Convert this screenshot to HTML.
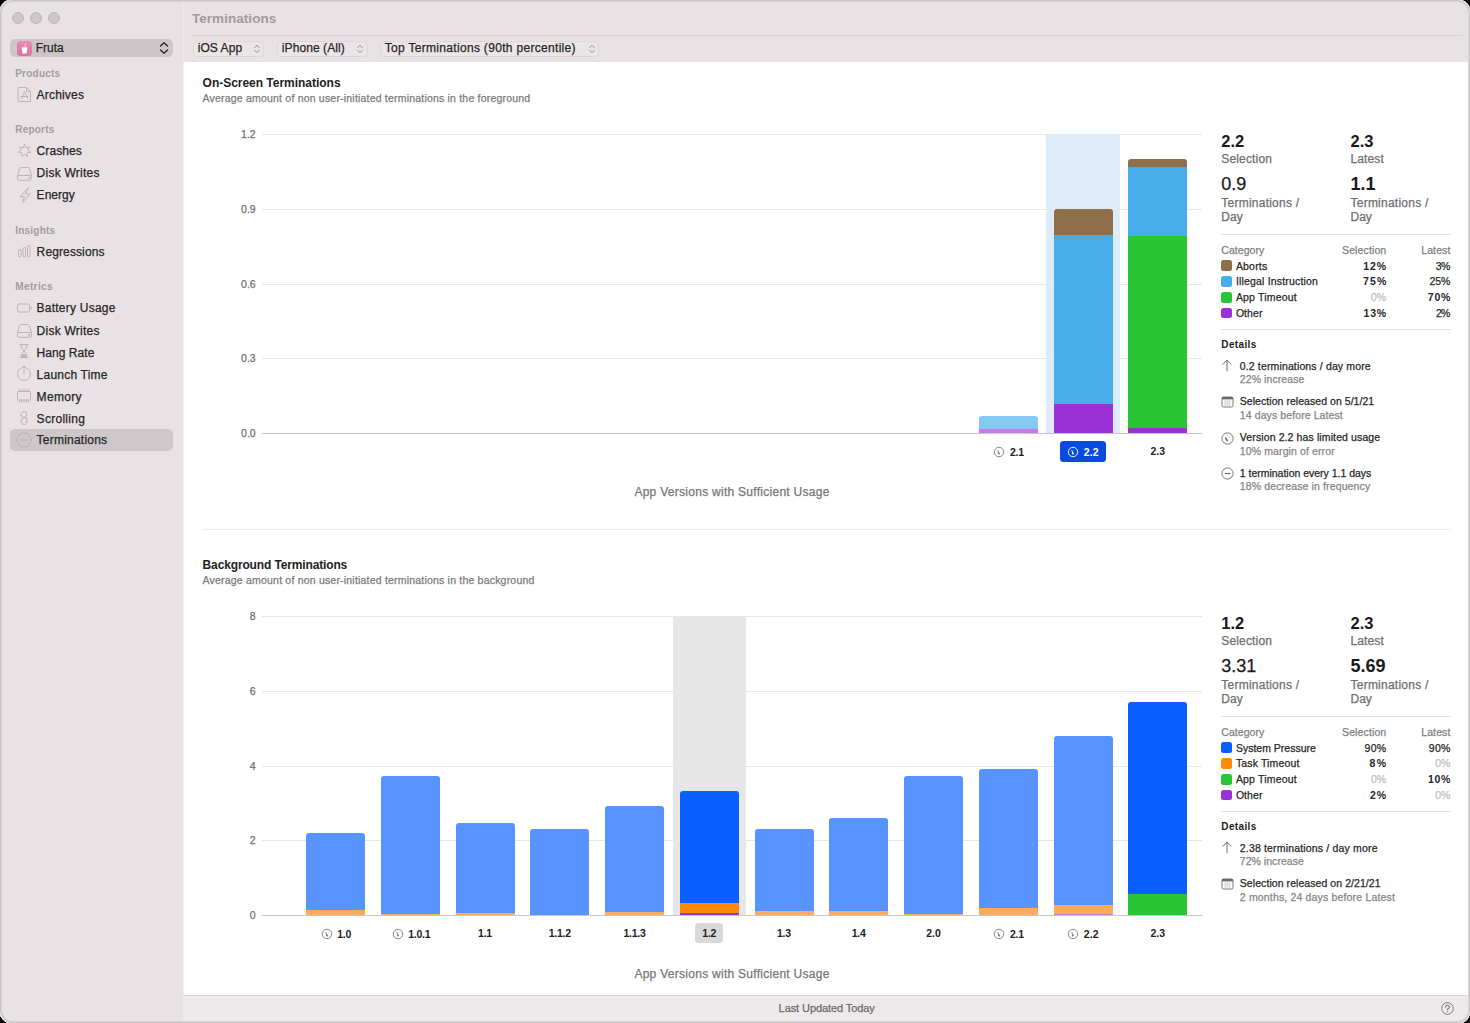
<!DOCTYPE html>
<html><head><meta charset="utf-8"><title>Terminations</title>
<style>
html,body{margin:0;padding:0;background:#000;width:1470px;height:1023px;overflow:hidden}
#win{position:absolute;left:-1px;top:-1px;width:1472px;height:1025px;border-radius:14px;overflow:hidden;background:#E8E2E4}
#inner{position:absolute;left:1px;top:1px;width:1470px;height:1023px}
#frame{position:absolute;left:0;top:0;width:1472px;height:1025px;border-radius:14px;box-shadow:inset 0 0 0 1px #EFECED, inset 0 0 0 2px #CBC7C9, inset 0 0 0 3px #D8D4D6;pointer-events:none}
.t{position:absolute;white-space:nowrap;font-family:"Liberation Sans",sans-serif}
.r{position:absolute}
</style></head><body>
<div id="win"><div id="inner">
<div class="r" style="left:184px;top:62px;width:1284px;height:933px;background:#FFFFFF;"></div>
<div class="r" style="left:184px;top:995px;width:1284px;height:1px;background:#D9D4D6;"></div>
<div class="r" style="left:184px;top:996px;width:1284px;height:27px;background:#EEE9EB;"></div>
<div class="r" style="left:183px;top:0px;width:1px;height:62px;background:#EDE8EA;"></div>
<div class="r" style="left:183px;top:62px;width:1px;height:933px;background:#F3EFF0;"></div>
<div class="r" style="left:183px;top:996px;width:1px;height:27px;background:#EDE8EA;"></div>
<div class="r" style="left:11.75px;top:11.75px;width:10.5px;height:10.5px;border-radius:50%;background:#CCC7C9;border:0.75px solid #BDB8BA"></div>
<div class="r" style="left:29.75px;top:11.75px;width:10.5px;height:10.5px;border-radius:50%;background:#CCC7C9;border:0.75px solid #BDB8BA"></div>
<div class="r" style="left:47.75px;top:11.75px;width:10.5px;height:10.5px;border-radius:50%;background:#CCC7C9;border:0.75px solid #BDB8BA"></div>
<div class="r" style="left:10px;top:39px;width:163px;height:18px;background:#CCC6C8;border-radius:5px;"></div>
<div class="r" style="left:17px;top:41px;width:14.5px;height:14.5px;border-radius:3.5px;background:linear-gradient(#E98CB3,#DF6E9C)"></div>
<svg class="r" style="left:17px;top:41px" width="15" height="15" viewBox="0 0 15 15"><path d="M4.6 6.2 L10.4 6.2 L9.6 12.6 L5.4 12.6 Z" fill="#fff"/><path d="M7.8 6.2 L8.6 2.2" stroke="#fff" stroke-width="0.8" opacity="0.8"/></svg>
<div class="t" style="left:35.70px;top:41.74px;font-size:12px;line-height:12px;font-weight:normal;color:#262626;letter-spacing:-0.013px;-webkit-text-stroke:0.25px currentColor;">Fruta</div>
<svg class="r" style="left:158px;top:41px" width="12" height="14" viewBox="0 0 12 14"><path d="M2.5 5 L6 1.8 L9.5 5" fill="none" stroke="#2E2E2E" stroke-width="1.5" stroke-linecap="round" stroke-linejoin="round"/><path d="M2.5 9 L6 12.2 L9.5 9" fill="none" stroke="#2E2E2E" stroke-width="1.5" stroke-linecap="round" stroke-linejoin="round"/></svg>
<div class="t" style="left:15.20px;top:68.53px;font-size:10px;line-height:10px;font-weight:bold;color:#A19C9E;letter-spacing:0.236px;">Products</div>
<div class="t" style="left:15.20px;top:124.94px;font-size:10px;line-height:10px;font-weight:bold;color:#A19C9E;letter-spacing:0.233px;">Reports</div>
<div class="t" style="left:15.20px;top:225.63px;font-size:10px;line-height:10px;font-weight:bold;color:#A19C9E;letter-spacing:0.236px;">Insights</div>
<div class="t" style="left:15.20px;top:282.24px;font-size:10px;line-height:10px;font-weight:bold;color:#A19C9E;letter-spacing:0.400px;">Metrics</div>
<div class="r" style="left:10px;top:429px;width:163px;height:22px;background:#CDC7C9;border-radius:5px;"></div>
<div class="t" style="left:36.60px;top:88.54px;font-size:12px;line-height:12px;font-weight:normal;color:#262626;letter-spacing:0.186px;-webkit-text-stroke:0.25px currentColor;">Archives</div>
<div class="t" style="left:36.60px;top:145.14px;font-size:12px;line-height:12px;font-weight:normal;color:#262626;letter-spacing:0.067px;-webkit-text-stroke:0.25px currentColor;">Crashes</div>
<div class="t" style="left:36.60px;top:167.24px;font-size:12px;line-height:12px;font-weight:normal;color:#262626;letter-spacing:0.235px;-webkit-text-stroke:0.25px currentColor;">Disk Writes</div>
<div class="t" style="left:36.60px;top:189.44px;font-size:12px;line-height:12px;font-weight:normal;color:#262626;letter-spacing:0.040px;-webkit-text-stroke:0.25px currentColor;">Energy</div>
<div class="t" style="left:36.60px;top:245.74px;font-size:12px;line-height:12px;font-weight:normal;color:#262626;letter-spacing:0.120px;-webkit-text-stroke:0.25px currentColor;">Regressions</div>
<div class="t" style="left:36.60px;top:302.14px;font-size:12px;line-height:12px;font-weight:normal;color:#262626;letter-spacing:0.229px;-webkit-text-stroke:0.25px currentColor;">Battery Usage</div>
<div class="t" style="left:36.60px;top:324.54px;font-size:12px;line-height:12px;font-weight:normal;color:#262626;letter-spacing:0.235px;-webkit-text-stroke:0.25px currentColor;">Disk Writes</div>
<div class="t" style="left:36.60px;top:346.64px;font-size:12px;line-height:12px;font-weight:normal;color:#262626;letter-spacing:0.044px;-webkit-text-stroke:0.25px currentColor;">Hang Rate</div>
<div class="t" style="left:36.60px;top:368.54px;font-size:12px;line-height:12px;font-weight:normal;color:#262626;letter-spacing:0.220px;-webkit-text-stroke:0.25px currentColor;">Launch Time</div>
<div class="t" style="left:36.60px;top:390.64px;font-size:12px;line-height:12px;font-weight:normal;color:#262626;letter-spacing:0.330px;-webkit-text-stroke:0.25px currentColor;">Memory</div>
<div class="t" style="left:36.60px;top:412.94px;font-size:12px;line-height:12px;font-weight:normal;color:#262626;letter-spacing:0.287px;-webkit-text-stroke:0.25px currentColor;">Scrolling</div>
<div class="t" style="left:36.60px;top:434.24px;font-size:12px;line-height:12px;font-weight:normal;color:#262626;letter-spacing:0.223px;-webkit-text-stroke:0.25px currentColor;">Terminations</div>
<svg class="r" style="left:14px;top:86px" width="20" height="18" viewBox="0 0 20 18" fill="none" stroke="#B5B0B2" stroke-width="0.9" stroke-linecap="round" stroke-linejoin="round"><path d="M4.5 1.5 H12.5 L16.5 5.5 V15.5 H4.5 Z"/><path d="M12.5 1.5 V5.5 H16.5"/><path d="M7.5 12.5 L10.5 5.5 L13.5 12.5 M6.8 10.5 H14.2"/></svg>
<svg class="r" style="left:14px;top:141px" width="20" height="18" viewBox="0 0 20 18" fill="none" stroke="#B5B0B2" stroke-width="0.9" stroke-linecap="round" stroke-linejoin="round"><polygon points="10.50,3.50 11.98,6.74 15.43,5.87 13.81,9.04 16.64,11.20 13.16,11.92 13.23,15.48 10.50,13.20 7.77,15.48 7.84,11.92 4.36,11.20 7.19,9.04 5.57,5.87 9.02,6.74"/></svg>
<svg class="r" style="left:14px;top:165px" width="20" height="18" viewBox="0 0 20 18" fill="none" stroke="#B5B0B2" stroke-width="0.9" stroke-linecap="round" stroke-linejoin="round"><path d="M3.5 11 L5.6 3.6 Q6 2.5 7.2 2.5 H13.8 Q15 2.5 15.4 3.6 L17.5 11"/><rect x="3.2" y="10.5" width="14.3" height="4.8" rx="2"/><circle cx="15" cy="13" r="0.5" fill="#B5B0B2"/></svg>
<svg class="r" style="left:14px;top:186px" width="20" height="18" viewBox="0 0 20 18" fill="none" stroke="#B5B0B2" stroke-width="0.9" stroke-linecap="round" stroke-linejoin="round"><path d="M14.2 2 L6 10.8 H10.5 L8.5 16.5 L16 8 H11.8 Z"/></svg>
<svg class="r" style="left:14px;top:242px" width="20" height="18" viewBox="0 0 20 18" fill="none" stroke="#B5B0B2" stroke-width="0.9" stroke-linecap="round" stroke-linejoin="round"><rect x="4.5" y="7.5" width="2.6" height="7.5" rx="1.3"/><rect x="9" y="5.5" width="2.6" height="9.5" rx="1.3"/><rect x="13.5" y="3.5" width="2.6" height="11.5" rx="1.3"/></svg>
<svg class="r" style="left:14px;top:300px" width="20" height="18" viewBox="0 0 20 18" fill="none" stroke="#B5B0B2" stroke-width="0.9" stroke-linecap="round" stroke-linejoin="round"><rect x="3.5" y="4" width="12" height="8" rx="1.5"/><path d="M17.2 6.8 V9.2"/></svg>
<svg class="r" style="left:14px;top:322px" width="20" height="18" viewBox="0 0 20 18" fill="none" stroke="#B5B0B2" stroke-width="0.9" stroke-linecap="round" stroke-linejoin="round"><path d="M3.5 11 L5.6 3.6 Q6 2.5 7.2 2.5 H13.8 Q15 2.5 15.4 3.6 L17.5 11"/><rect x="3.2" y="10.5" width="14.3" height="4.8" rx="2"/><circle cx="15" cy="13" r="0.5" fill="#B5B0B2"/></svg>
<svg class="r" style="left:14px;top:342px" width="20" height="18" viewBox="0 0 20 18" fill="none" stroke="#B5B0B2" stroke-width="0.9" stroke-linecap="round" stroke-linejoin="round"><path d="M6 2.5 H14 M6 15.5 H14 M7 2.5 Q7 7 10 9 Q13 7 13 2.5 M7 15.5 Q7 11 10 9 Q13 11 13 15.5"/><path d="M8 14.5 L10 12 L12 14.5 Z" fill="#B5B0B2"/></svg>
<svg class="r" style="left:14px;top:364px" width="20" height="18" viewBox="0 0 20 18" fill="none" stroke="#B5B0B2" stroke-width="0.9" stroke-linecap="round" stroke-linejoin="round"><circle cx="10" cy="10" r="6.5"/><path d="M10 10 V5.5 M9 2.2 H11"/></svg>
<svg class="r" style="left:14px;top:387px" width="20" height="18" viewBox="0 0 20 18" fill="none" stroke="#B5B0B2" stroke-width="0.9" stroke-linecap="round" stroke-linejoin="round"><rect x="3.5" y="4.5" width="13" height="8.5" rx="1"/><path d="M5.5 2.5 V4 M7.8 2.5 V4 M10 2.5 V4 M12.2 2.5 V4 M14.5 2.5 V4 M5.5 13.5 V15 M7.8 13.5 V15 M10 13.5 V15 M12.2 13.5 V15 M14.5 13.5 V15"/></svg>
<svg class="r" style="left:14px;top:409px" width="20" height="18" viewBox="0 0 20 18" fill="none" stroke="#B5B0B2" stroke-width="0.9" stroke-linecap="round" stroke-linejoin="round"><path d="M7 7 Q7 2.5 10 2.5 Q13 2.5 13 6 L10 9 L7 6.5 M7 11 Q7 15.5 10 15.5 Q13 15.5 13 11 Q13 8 10 8.5 L7 11"/></svg>
<svg class="r" style="left:14px;top:431px" width="20" height="18" viewBox="0 0 20 18" fill="none" stroke="#B5B0B2" stroke-width="0.9" stroke-linecap="round" stroke-linejoin="round"><circle cx="10" cy="9" r="7"/><path d="M6.5 9 H13.5"/></svg>
<div class="t" style="left:191.90px;top:11.87px;font-size:13.5px;line-height:13.5px;font-weight:bold;color:#A09B9D;letter-spacing:0.059px;">Terminations</div>
<div class="r" style="left:191px;top:35px;width:1272px;height:1px;background:#D8D3D5;"></div>
<div class="r" style="left:192.5px;top:41px;width:71.80000000000001px;height:15.5px;border-radius:4px;background:#EAE5E7;border:0.5px solid #DDD8DA;box-sizing:border-box"></div>
<div class="t" style="left:197.70px;top:42.14px;font-size:12px;line-height:12px;font-weight:normal;color:#262626;letter-spacing:0.058px;-webkit-text-stroke:0.25px currentColor;">iOS App</div>
<svg class="r" style="left:253.0px;top:43.5px" width="8" height="10" viewBox="0 0 8 10"><path d="M1.8 3.6 L4 1.4 L6.2 3.6 M1.8 6.4 L4 8.6 L6.2 6.4" fill="none" stroke="#8F8A8C" stroke-width="1" stroke-linecap="round" stroke-linejoin="round"/></svg>
<div class="r" style="left:276.6px;top:41px;width:91.0px;height:15.5px;border-radius:4px;background:#EAE5E7;border:0.5px solid #DDD8DA;box-sizing:border-box"></div>
<div class="t" style="left:281.80px;top:42.14px;font-size:12px;line-height:12px;font-weight:normal;color:#262626;letter-spacing:0.086px;-webkit-text-stroke:0.25px currentColor;">iPhone (All)</div>
<svg class="r" style="left:356.3px;top:43.5px" width="8" height="10" viewBox="0 0 8 10"><path d="M1.8 3.6 L4 1.4 L6.2 3.6 M1.8 6.4 L4 8.6 L6.2 6.4" fill="none" stroke="#8F8A8C" stroke-width="1" stroke-linecap="round" stroke-linejoin="round"/></svg>
<div class="r" style="left:379.5px;top:41px;width:219.70000000000005px;height:15.5px;border-radius:4px;background:#EAE5E7;border:0.5px solid #DDD8DA;box-sizing:border-box"></div>
<div class="t" style="left:384.70px;top:42.14px;font-size:12px;line-height:12px;font-weight:normal;color:#262626;letter-spacing:0.314px;-webkit-text-stroke:0.25px currentColor;">Top Terminations (90th percentile)</div>
<svg class="r" style="left:587.9px;top:43.5px" width="8" height="10" viewBox="0 0 8 10"><path d="M1.8 3.6 L4 1.4 L6.2 3.6 M1.8 6.4 L4 8.6 L6.2 6.4" fill="none" stroke="#8F8A8C" stroke-width="1" stroke-linecap="round" stroke-linejoin="round"/></svg>
<div class="t" style="left:778.60px;top:1003.29px;font-size:11px;line-height:11px;font-weight:normal;color:#6B6B6B;letter-spacing:-0.085px;-webkit-text-stroke:0.25px currentColor;">Last Updated Today</div>
<svg class="r" style="left:1440px;top:1001px" width="15" height="15" viewBox="0 0 15 15"><circle cx="7.5" cy="7.5" r="5.8" fill="none" stroke="#7A7A7A" stroke-width="1"/><path d="M5.6 6.1 Q5.6 4.2 7.5 4.2 Q9.4 4.2 9.4 5.9 Q9.4 7 8.2 7.5 Q7.5 7.8 7.5 8.8" fill="none" stroke="#7A7A7A" stroke-width="1.1" stroke-linecap="round"/><circle cx="7.5" cy="10.6" r="0.7" fill="#7A7A7A"/></svg>
<div class="t" style="left:202.60px;top:76.94px;font-size:12px;line-height:12px;font-weight:bold;color:#222222;letter-spacing:-0.024px;">On-Screen Terminations</div>
<div class="t" style="left:202.60px;top:92.71px;font-size:10.5px;line-height:10.5px;font-weight:normal;color:#7A7A7A;letter-spacing:0.199px;-webkit-text-stroke:0.25px currentColor;">Average amount of non user-initiated terminations in the foreground</div>
<div class="r" style="left:1046.4px;top:134px;width:73.3px;height:299px;background:#DEEBFB;"></div>
<div class="r" style="left:262px;top:134px;width:940px;height:1px;background:#E8E8E8;"></div>
<div class="t" style="left:241.10px;top:129.21px;font-size:10.5px;line-height:10.5px;font-weight:normal;color:#6E6E6E;letter-spacing:0.000px;-webkit-text-stroke:0.25px currentColor;">1.2</div>
<div class="r" style="left:262px;top:209px;width:940px;height:1px;background:#E8E8E8;"></div>
<div class="t" style="left:241.10px;top:204.21px;font-size:10.5px;line-height:10.5px;font-weight:normal;color:#6E6E6E;letter-spacing:0.000px;-webkit-text-stroke:0.25px currentColor;">0.9</div>
<div class="r" style="left:262px;top:284px;width:940px;height:1px;background:#E8E8E8;"></div>
<div class="t" style="left:241.10px;top:279.21px;font-size:10.5px;line-height:10.5px;font-weight:normal;color:#6E6E6E;letter-spacing:0.000px;-webkit-text-stroke:0.25px currentColor;">0.6</div>
<div class="r" style="left:262px;top:358px;width:940px;height:1px;background:#E8E8E8;"></div>
<div class="t" style="left:241.10px;top:353.21px;font-size:10.5px;line-height:10.5px;font-weight:normal;color:#6E6E6E;letter-spacing:0.000px;-webkit-text-stroke:0.25px currentColor;">0.3</div>
<div class="t" style="left:241.10px;top:428.21px;font-size:10.5px;line-height:10.5px;font-weight:normal;color:#6E6E6E;letter-spacing:0.000px;-webkit-text-stroke:0.25px currentColor;">0.0</div>
<div class="r" style="left:978.77px;top:416.1px;width:59px;height:16.9px;background:linear-gradient(to bottom,#85C8F2 0.00px, #85C8F2 13.00px,#C27DE6 13.00px, #C27DE6 16.90px);border-radius:3px 3px 0 0;"></div>
<div class="r" style="left:1053.5px;top:209px;width:59px;height:224px;background:linear-gradient(to bottom,#8F6F4A 0.00px, #8F6F4A 26.30px,#48AEEA 26.30px, #48AEEA 195.20px,#9B30D5 195.20px, #9B30D5 224.00px);border-radius:3px 3px 0 0;"></div>
<div class="r" style="left:1128.23px;top:159px;width:59px;height:274px;background:linear-gradient(to bottom,#8F6F4A 0.00px, #8F6F4A 8.20px,#48AEEA 8.20px, #48AEEA 77.20px,#2AC534 77.20px, #2AC534 269.10px,#9B30D5 269.10px, #9B30D5 274.00px);border-radius:3px 3px 0 0;"></div>
<div class="r" style="left:262px;top:433px;width:940px;height:1px;background:#C7C7C7;"></div>
<svg class="r" style="left:993.37px;top:445.90px" width="12" height="12" viewBox="0 0 12 12"><circle cx="6" cy="6" r="4.7" fill="none" stroke="#7A7A7A" stroke-width="0.9"/><path d="M4.9 4.6 L5.9 7.4" stroke="#7A7A7A" stroke-width="1.0" stroke-linecap="round"/><circle cx="6" cy="7.5" r="0.9" fill="#7A7A7A"/><circle cx="4" cy="4.2" r="0.3" fill="#7A7A7A" opacity="0.6"/><circle cx="6" cy="3" r="0.3" fill="#7A7A7A" opacity="0.6"/><circle cx="8" cy="4.2" r="0.3" fill="#7A7A7A" opacity="0.6"/></svg>
<div class="t" style="left:1009.97px;top:447.01px;font-size:10.5px;line-height:10.5px;font-weight:bold;color:#222222;letter-spacing:-0.250px;">2.1</div>
<div class="r" style="left:1059.8px;top:441.2px;width:46.4px;height:20.6px;background:#0B4ADB;border-radius:3.5px;"></div>
<svg class="r" style="left:1067.10px;top:445.90px" width="12" height="12" viewBox="0 0 12 12"><circle cx="6" cy="6" r="4.7" fill="none" stroke="#FFFFFF" stroke-width="0.9"/><path d="M4.9 4.6 L5.9 7.4" stroke="#FFFFFF" stroke-width="1.0" stroke-linecap="round"/><circle cx="6" cy="7.5" r="0.9" fill="#FFFFFF"/><circle cx="4" cy="4.2" r="0.3" fill="#FFFFFF" opacity="0.6"/><circle cx="6" cy="3" r="0.3" fill="#FFFFFF" opacity="0.6"/><circle cx="8" cy="4.2" r="0.3" fill="#FFFFFF" opacity="0.6"/></svg>
<div class="t" style="left:1083.70px;top:447.01px;font-size:10.5px;line-height:10.5px;font-weight:bold;color:#FFFFFF;letter-spacing:0.100px;">2.2</div>
<div class="t" style="left:1150.38px;top:446.21px;font-size:10.5px;line-height:10.5px;font-weight:bold;color:#222222;letter-spacing:0.050px;">2.3</div>

<div class="t" style="left:634.40px;top:485.94px;font-size:12px;line-height:12px;font-weight:normal;color:#767676;letter-spacing:0.276px;-webkit-text-stroke:0.25px currentColor;">App Versions with Sufficient Usage</div>
<div class="r" style="left:202px;top:529px;width:1249px;height:1px;background:#EBEBEB;"></div>
<div class="t" style="left:202.60px;top:558.94px;font-size:12px;line-height:12px;font-weight:bold;color:#222222;letter-spacing:-0.141px;">Background Terminations</div>
<div class="t" style="left:202.60px;top:574.71px;font-size:10.5px;line-height:10.5px;font-weight:normal;color:#7A7A7A;letter-spacing:0.200px;-webkit-text-stroke:0.25px currentColor;">Average amount of non user-initiated terminations in the background</div>
<div class="r" style="left:672.8px;top:616px;width:73.3px;height:299px;background:#E6E6E6;"></div>
<div class="r" style="left:262px;top:616px;width:940px;height:1px;background:#E8E8E8;"></div>
<div class="t" style="left:249.85px;top:611.21px;font-size:10.5px;line-height:10.5px;font-weight:normal;color:#6E6E6E;letter-spacing:0.000px;-webkit-text-stroke:0.25px currentColor;">8</div>
<div class="r" style="left:262px;top:691px;width:940px;height:1px;background:#E8E8E8;"></div>
<div class="t" style="left:249.85px;top:686.21px;font-size:10.5px;line-height:10.5px;font-weight:normal;color:#6E6E6E;letter-spacing:0.000px;-webkit-text-stroke:0.25px currentColor;">6</div>
<div class="r" style="left:262px;top:766px;width:940px;height:1px;background:#E8E8E8;"></div>
<div class="t" style="left:249.85px;top:761.21px;font-size:10.5px;line-height:10.5px;font-weight:normal;color:#6E6E6E;letter-spacing:0.000px;-webkit-text-stroke:0.25px currentColor;">4</div>
<div class="r" style="left:262px;top:840px;width:940px;height:1px;background:#E8E8E8;"></div>
<div class="t" style="left:249.85px;top:835.21px;font-size:10.5px;line-height:10.5px;font-weight:normal;color:#6E6E6E;letter-spacing:0.000px;-webkit-text-stroke:0.25px currentColor;">2</div>
<div class="t" style="left:249.85px;top:910.21px;font-size:10.5px;line-height:10.5px;font-weight:normal;color:#6E6E6E;letter-spacing:0.000px;-webkit-text-stroke:0.25px currentColor;">0</div>
<div class="r" style="left:306.2px;top:832.9px;width:59px;height:82.1px;background:linear-gradient(to bottom,#5894FF 0.00px, #5894FF 77.10px,#FFA95C 77.10px, #FFA95C 82.10px);border-radius:3px 3px 0 0;"></div>
<div class="r" style="left:380.93px;top:776px;width:59px;height:139px;background:linear-gradient(to bottom,#5894FF 0.00px, #5894FF 137.90px,#FFA95C 137.90px, #FFA95C 139.00px);border-radius:3px 3px 0 0;"></div>
<div class="r" style="left:455.66px;top:823.2px;width:59px;height:91.8px;background:linear-gradient(to bottom,#5894FF 0.00px, #5894FF 89.70px,#FFA95C 89.70px, #FFA95C 91.80px);border-radius:3px 3px 0 0;"></div>
<div class="r" style="left:530.39px;top:828.6px;width:59px;height:86.4px;background:linear-gradient(to bottom,#5894FF 0.00px, #5894FF 85.60px,#FFA95C 85.60px, #FFA95C 86.40px);border-radius:3px 3px 0 0;"></div>
<div class="r" style="left:605.12px;top:805.7px;width:59px;height:109.3px;background:linear-gradient(to bottom,#5894FF 0.00px, #5894FF 106.10px,#FFA95C 106.10px, #FFA95C 109.30px);border-radius:3px 3px 0 0;"></div>
<div class="r" style="left:679.85px;top:790.8px;width:59px;height:124.2px;background:linear-gradient(to bottom,#0A5FFF 0.00px, #0A5FFF 111.80px,#FF8A0A 111.80px, #FF8A0A 122.10px,#9B30D5 122.10px, #9B30D5 124.20px);border-radius:3px 3px 0 0;"></div>
<div class="r" style="left:754.58px;top:828.7px;width:59px;height:86.3px;background:linear-gradient(to bottom,#5894FF 0.00px, #5894FF 82.00px,#FFA95C 82.00px, #FFA95C 86.30px);border-radius:3px 3px 0 0;"></div>
<div class="r" style="left:829.31px;top:817.7px;width:59px;height:97.3px;background:linear-gradient(to bottom,#5894FF 0.00px, #5894FF 93.00px,#FFA95C 93.00px, #FFA95C 97.30px);border-radius:3px 3px 0 0;"></div>
<div class="r" style="left:904.04px;top:775.5px;width:59px;height:139.5px;background:linear-gradient(to bottom,#5894FF 0.00px, #5894FF 138.00px,#FFA95C 138.00px, #FFA95C 139.50px);border-radius:3px 3px 0 0;"></div>
<div class="r" style="left:978.77px;top:768.9px;width:59px;height:146.1px;background:linear-gradient(to bottom,#5894FF 0.00px, #5894FF 139.30px,#FFA95C 139.30px, #FFA95C 146.10px);border-radius:3px 3px 0 0;"></div>
<div class="r" style="left:1053.5px;top:735.7px;width:59px;height:179.3px;background:linear-gradient(to bottom,#5894FF 0.00px, #5894FF 168.70px,#FFA95C 168.70px, #FFA95C 177.80px,#C27DE6 177.80px, #C27DE6 179.30px);border-radius:3px 3px 0 0;"></div>
<div class="r" style="left:1128.23px;top:701.6px;width:59px;height:213.4px;background:linear-gradient(to bottom,#0A5FFF 0.00px, #0A5FFF 192.50px,#2AC534 192.50px, #2AC534 213.40px);border-radius:3px 3px 0 0;"></div>
<div class="r" style="left:262px;top:915px;width:940px;height:1px;background:#C7C7C7;"></div>
<svg class="r" style="left:320.60px;top:927.90px" width="12" height="12" viewBox="0 0 12 12"><circle cx="6" cy="6" r="4.7" fill="none" stroke="#7A7A7A" stroke-width="0.9"/><path d="M4.9 4.6 L5.9 7.4" stroke="#7A7A7A" stroke-width="1.0" stroke-linecap="round"/><circle cx="6" cy="7.5" r="0.9" fill="#7A7A7A"/><circle cx="4" cy="4.2" r="0.3" fill="#7A7A7A" opacity="0.6"/><circle cx="6" cy="3" r="0.3" fill="#7A7A7A" opacity="0.6"/><circle cx="8" cy="4.2" r="0.3" fill="#7A7A7A" opacity="0.6"/></svg>
<div class="t" style="left:337.20px;top:929.01px;font-size:10.5px;line-height:10.5px;font-weight:bold;color:#222222;letter-spacing:-0.250px;">1.0</div>
<svg class="r" style="left:391.53px;top:927.90px" width="12" height="12" viewBox="0 0 12 12"><circle cx="6" cy="6" r="4.7" fill="none" stroke="#7A7A7A" stroke-width="0.9"/><path d="M4.9 4.6 L5.9 7.4" stroke="#7A7A7A" stroke-width="1.0" stroke-linecap="round"/><circle cx="6" cy="7.5" r="0.9" fill="#7A7A7A"/><circle cx="4" cy="4.2" r="0.3" fill="#7A7A7A" opacity="0.6"/><circle cx="6" cy="3" r="0.3" fill="#7A7A7A" opacity="0.6"/><circle cx="8" cy="4.2" r="0.3" fill="#7A7A7A" opacity="0.6"/></svg>
<div class="t" style="left:408.13px;top:929.01px;font-size:10.5px;line-height:10.5px;font-weight:bold;color:#222222;letter-spacing:-0.250px;">1.0.1</div>
<div class="t" style="left:478.11px;top:928.21px;font-size:10.5px;line-height:10.5px;font-weight:bold;color:#222222;letter-spacing:-0.250px;">1.1</div>
<div class="t" style="left:548.72px;top:928.21px;font-size:10.5px;line-height:10.5px;font-weight:bold;color:#222222;letter-spacing:-0.250px;">1.1.2</div>
<div class="t" style="left:623.45px;top:928.21px;font-size:10.5px;line-height:10.5px;font-weight:bold;color:#222222;letter-spacing:-0.250px;">1.1.3</div>
<div class="r" style="left:695.1px;top:923px;width:28.4px;height:19.7px;background:#D9D9D9;border-radius:3.5px;"></div>
<div class="t" style="left:702.30px;top:928.21px;font-size:10.5px;line-height:10.5px;font-weight:bold;color:#222222;letter-spacing:-0.250px;">1.2</div>
<div class="t" style="left:777.03px;top:928.21px;font-size:10.5px;line-height:10.5px;font-weight:bold;color:#222222;letter-spacing:-0.250px;">1.3</div>
<div class="t" style="left:851.76px;top:928.21px;font-size:10.5px;line-height:10.5px;font-weight:bold;color:#222222;letter-spacing:-0.250px;">1.4</div>
<div class="t" style="left:926.19px;top:928.21px;font-size:10.5px;line-height:10.5px;font-weight:bold;color:#222222;letter-spacing:0.050px;">2.0</div>
<svg class="r" style="left:993.37px;top:927.90px" width="12" height="12" viewBox="0 0 12 12"><circle cx="6" cy="6" r="4.7" fill="none" stroke="#7A7A7A" stroke-width="0.9"/><path d="M4.9 4.6 L5.9 7.4" stroke="#7A7A7A" stroke-width="1.0" stroke-linecap="round"/><circle cx="6" cy="7.5" r="0.9" fill="#7A7A7A"/><circle cx="4" cy="4.2" r="0.3" fill="#7A7A7A" opacity="0.6"/><circle cx="6" cy="3" r="0.3" fill="#7A7A7A" opacity="0.6"/><circle cx="8" cy="4.2" r="0.3" fill="#7A7A7A" opacity="0.6"/></svg>
<div class="t" style="left:1009.97px;top:929.01px;font-size:10.5px;line-height:10.5px;font-weight:bold;color:#222222;letter-spacing:-0.250px;">2.1</div>
<svg class="r" style="left:1067.10px;top:927.90px" width="12" height="12" viewBox="0 0 12 12"><circle cx="6" cy="6" r="4.7" fill="none" stroke="#7A7A7A" stroke-width="0.9"/><path d="M4.9 4.6 L5.9 7.4" stroke="#7A7A7A" stroke-width="1.0" stroke-linecap="round"/><circle cx="6" cy="7.5" r="0.9" fill="#7A7A7A"/><circle cx="4" cy="4.2" r="0.3" fill="#7A7A7A" opacity="0.6"/><circle cx="6" cy="3" r="0.3" fill="#7A7A7A" opacity="0.6"/><circle cx="8" cy="4.2" r="0.3" fill="#7A7A7A" opacity="0.6"/></svg>
<div class="t" style="left:1083.70px;top:929.01px;font-size:10.5px;line-height:10.5px;font-weight:bold;color:#222222;letter-spacing:0.100px;">2.2</div>
<div class="t" style="left:1150.38px;top:928.21px;font-size:10.5px;line-height:10.5px;font-weight:bold;color:#222222;letter-spacing:0.050px;">2.3</div>

<div class="t" style="left:634.40px;top:967.94px;font-size:12px;line-height:12px;font-weight:normal;color:#767676;letter-spacing:0.276px;-webkit-text-stroke:0.25px currentColor;">App Versions with Sufficient Usage</div>
<div class="t" style="left:1221.30px;top:133.13px;font-size:16.5px;line-height:16.5px;font-weight:bold;color:#1A1A1A;letter-spacing:0.000px;">2.2</div>
<div class="t" style="left:1350.50px;top:133.13px;font-size:16.5px;line-height:16.5px;font-weight:bold;color:#1A1A1A;letter-spacing:0.000px;">2.3</div>
<div class="t" style="left:1221.30px;top:152.64px;font-size:12px;line-height:12px;font-weight:normal;color:#6E6E6E;letter-spacing:0.156px;-webkit-text-stroke:0.25px currentColor;">Selection</div>
<div class="t" style="left:1350.50px;top:152.64px;font-size:12px;line-height:12px;font-weight:normal;color:#6E6E6E;letter-spacing:0.120px;-webkit-text-stroke:0.25px currentColor;">Latest</div>
<div class="t" style="left:1221.30px;top:174.96px;font-size:18px;line-height:18px;font-weight:normal;color:#1A1A1A;letter-spacing:0.000px;-webkit-text-stroke:0.25px currentColor;">0.9</div>
<div class="t" style="left:1350.50px;top:174.96px;font-size:18px;line-height:18px;font-weight:bold;color:#1A1A1A;letter-spacing:0.000px;">1.1</div>
<div class="t" style="left:1221.30px;top:196.64px;font-size:12px;line-height:12px;font-weight:normal;color:#6E6E6E;letter-spacing:0.238px;-webkit-text-stroke:0.25px currentColor;">Terminations /</div>
<div class="t" style="left:1221.30px;top:211.24px;font-size:12px;line-height:12px;font-weight:normal;color:#6E6E6E;letter-spacing:0.000px;-webkit-text-stroke:0.25px currentColor;">Day</div>
<div class="t" style="left:1350.50px;top:196.64px;font-size:12px;line-height:12px;font-weight:normal;color:#6E6E6E;letter-spacing:0.238px;-webkit-text-stroke:0.25px currentColor;">Terminations /</div>
<div class="t" style="left:1350.50px;top:211.24px;font-size:12px;line-height:12px;font-weight:normal;color:#6E6E6E;letter-spacing:0.000px;-webkit-text-stroke:0.25px currentColor;">Day</div>
<div class="r" style="left:1221px;top:234px;width:230px;height:1px;background:#E3E3E3;"></div>
<div class="t" style="left:1221.30px;top:245.01px;font-size:10.5px;line-height:10.5px;font-weight:normal;color:#7E7E7E;letter-spacing:0.057px;-webkit-text-stroke:0.25px currentColor;">Category</div>
<div class="t" style="left:1342.00px;top:245.01px;font-size:10.5px;line-height:10.5px;font-weight:normal;color:#7E7E7E;letter-spacing:0.125px;-webkit-text-stroke:0.25px currentColor;">Selection</div>
<div class="t" style="left:1421.20px;top:245.01px;font-size:10.5px;line-height:10.5px;font-weight:normal;color:#7E7E7E;letter-spacing:0.120px;-webkit-text-stroke:0.25px currentColor;">Latest</div>
<div class="r" style="left:1221px;top:260.4px;width:10.8px;height:10.8px;background:#8F6F4A;border-radius:2.5px;"></div>
<div class="t" style="left:1235.90px;top:260.81px;font-size:10.5px;line-height:10.5px;font-weight:normal;color:#262626;letter-spacing:0.190px;-webkit-text-stroke:0.25px currentColor;">Aborts</div>
<div class="t" style="left:1363.20px;top:260.81px;font-size:10.5px;line-height:10.5px;font-weight:bold;color:#262626;letter-spacing:1.000px;">12%</div>
<div class="t" style="left:1435.80px;top:260.81px;font-size:10.5px;line-height:10.5px;font-weight:normal;color:#262626;letter-spacing:-0.600px;-webkit-text-stroke:0.25px currentColor;">3%</div>
<div class="r" style="left:1221px;top:276.1px;width:10.8px;height:10.8px;background:#48AEEA;border-radius:2.5px;"></div>
<div class="t" style="left:1235.90px;top:276.43px;font-size:10.5px;line-height:10.5px;font-weight:normal;color:#262626;letter-spacing:0.178px;-webkit-text-stroke:0.25px currentColor;">Illegal Instruction</div>
<div class="t" style="left:1363.00px;top:276.43px;font-size:10.5px;line-height:10.5px;font-weight:bold;color:#262626;letter-spacing:1.100px;">75%</div>
<div class="t" style="left:1429.50px;top:276.43px;font-size:10.5px;line-height:10.5px;font-weight:normal;color:#262626;letter-spacing:-0.050px;-webkit-text-stroke:0.25px currentColor;">25%</div>
<div class="r" style="left:1221px;top:291.8px;width:10.8px;height:10.8px;background:#2AC534;border-radius:2.5px;"></div>
<div class="t" style="left:1235.90px;top:292.05px;font-size:10.5px;line-height:10.5px;font-weight:normal;color:#262626;letter-spacing:0.185px;-webkit-text-stroke:0.25px currentColor;">App Timeout</div>
<div class="t" style="left:1371.00px;top:292.05px;font-size:10.5px;line-height:10.5px;font-weight:normal;color:#BDBDBD;letter-spacing:0.000px;-webkit-text-stroke:0.25px currentColor;">0%</div>
<div class="t" style="left:1427.80px;top:292.05px;font-size:10.5px;line-height:10.5px;font-weight:bold;color:#262626;letter-spacing:0.800px;">70%</div>
<div class="r" style="left:1221px;top:307.5px;width:10.8px;height:10.8px;background:#9B30D5;border-radius:2.5px;"></div>
<div class="t" style="left:1235.90px;top:307.67px;font-size:10.5px;line-height:10.5px;font-weight:normal;color:#262626;letter-spacing:0.062px;-webkit-text-stroke:0.25px currentColor;">Other</div>
<div class="t" style="left:1363.60px;top:307.67px;font-size:10.5px;line-height:10.5px;font-weight:bold;color:#262626;letter-spacing:0.800px;">13%</div>
<div class="t" style="left:1435.90px;top:307.67px;font-size:10.5px;line-height:10.5px;font-weight:normal;color:#262626;letter-spacing:-0.700px;-webkit-text-stroke:0.25px currentColor;">2%</div>
<div class="r" style="left:1221px;top:329px;width:230px;height:1px;background:#E3E3E3;"></div>
<div class="t" style="left:1221.30px;top:340.24px;font-size:10px;line-height:10px;font-weight:bold;color:#1E1E1E;letter-spacing:0.367px;">Details</div>
<div class="t" style="left:1239.80px;top:360.61px;font-size:10.5px;line-height:10.5px;font-weight:normal;color:#262626;letter-spacing:0.140px;-webkit-text-stroke:0.25px currentColor;">0.2 terminations / day more</div>
<div class="t" style="left:1239.80px;top:374.21px;font-size:10.5px;line-height:10.5px;font-weight:normal;color:#858585;letter-spacing:0.082px;-webkit-text-stroke:0.25px currentColor;">22% increase</div>
<svg class="r" style="left:1221px;top:359.0px" width="12" height="13" viewBox="0 0 12 13"><path d="M6 1.2 V11.8 M2 5.2 L6 1.2 L10 5.2" fill="none" stroke="#6A6A6A" stroke-width="1" stroke-linecap="round" stroke-linejoin="round"/></svg>
<div class="t" style="left:1239.80px;top:396.28px;font-size:10.5px;line-height:10.5px;font-weight:normal;color:#262626;letter-spacing:0.048px;-webkit-text-stroke:0.25px currentColor;">Selection released on 5/1/21</div>
<div class="t" style="left:1239.80px;top:409.88px;font-size:10.5px;line-height:10.5px;font-weight:normal;color:#858585;letter-spacing:0.100px;-webkit-text-stroke:0.25px currentColor;">14 days before Latest</div>
<svg class="r" style="left:1220.5px;top:395.7px" width="13" height="12" viewBox="0 0 13 12"><rect x="1" y="1" width="11" height="10" rx="1.5" fill="none" stroke="#6A6A6A" stroke-width="0.9"/><rect x="1" y="1" width="11" height="2.4" fill="#6A6A6A"/><path d="M3 5 H10 M3 7 H10 M3 9 H10 M4.5 4.5 V9.5 M6.5 4.5 V9.5 M8.5 4.5 V9.5" stroke="#C4C4C4" stroke-width="0.6"/></svg>
<div class="t" style="left:1239.80px;top:431.95px;font-size:10.5px;line-height:10.5px;font-weight:normal;color:#262626;letter-spacing:0.113px;-webkit-text-stroke:0.25px currentColor;">Version 2.2 has limited usage</div>
<div class="t" style="left:1239.80px;top:445.55px;font-size:10.5px;line-height:10.5px;font-weight:normal;color:#858585;letter-spacing:0.117px;-webkit-text-stroke:0.25px currentColor;">10% margin of error</div>
<svg class="r" style="left:1220.8px;top:431.6px" width="13" height="13" viewBox="0 0 13 13"><circle cx="6.5" cy="6.5" r="5.6" fill="none" stroke="#6A6A6A" stroke-width="0.9"/><path d="M4.8 6.3 L6.2 8.6" stroke="#6A6A6A" stroke-width="1.6" stroke-linecap="round"/><circle cx="4.3" cy="5.2" r="0.45" fill="#6A6A6A"/><circle cx="6.6" cy="3.5" r="0.45" fill="#6A6A6A"/><circle cx="8.9" cy="5.1" r="0.45" fill="#6A6A6A"/></svg>
<div class="t" style="left:1239.80px;top:467.62px;font-size:10.5px;line-height:10.5px;font-weight:normal;color:#262626;letter-spacing:-0.015px;-webkit-text-stroke:0.25px currentColor;">1 termination every 1.1 days</div>
<div class="t" style="left:1239.80px;top:481.22px;font-size:10.5px;line-height:10.5px;font-weight:normal;color:#858585;letter-spacing:0.131px;-webkit-text-stroke:0.25px currentColor;">18% decrease in frequency</div>
<svg class="r" style="left:1221px;top:467.0px" width="13" height="13" viewBox="0 0 13 13"><circle cx="6.5" cy="6.5" r="5.6" fill="none" stroke="#6A6A6A" stroke-width="0.9"/><path d="M3.8 6.5 H9.2" stroke="#6A6A6A" stroke-width="1.1"/></svg>
<div class="r" style="left:1221px;top:529px;width:230px;height:0px;background:#E3E3E3;"></div>
<div class="t" style="left:1221.30px;top:615.13px;font-size:16.5px;line-height:16.5px;font-weight:bold;color:#1A1A1A;letter-spacing:0.000px;">1.2</div>
<div class="t" style="left:1350.50px;top:615.13px;font-size:16.5px;line-height:16.5px;font-weight:bold;color:#1A1A1A;letter-spacing:0.000px;">2.3</div>
<div class="t" style="left:1221.30px;top:634.64px;font-size:12px;line-height:12px;font-weight:normal;color:#6E6E6E;letter-spacing:0.156px;-webkit-text-stroke:0.25px currentColor;">Selection</div>
<div class="t" style="left:1350.50px;top:634.64px;font-size:12px;line-height:12px;font-weight:normal;color:#6E6E6E;letter-spacing:0.120px;-webkit-text-stroke:0.25px currentColor;">Latest</div>
<div class="t" style="left:1221.30px;top:656.96px;font-size:18px;line-height:18px;font-weight:normal;color:#1A1A1A;letter-spacing:0.000px;-webkit-text-stroke:0.25px currentColor;">3.31</div>
<div class="t" style="left:1350.50px;top:656.96px;font-size:18px;line-height:18px;font-weight:bold;color:#1A1A1A;letter-spacing:0.000px;">5.69</div>
<div class="t" style="left:1221.30px;top:678.64px;font-size:12px;line-height:12px;font-weight:normal;color:#6E6E6E;letter-spacing:0.238px;-webkit-text-stroke:0.25px currentColor;">Terminations /</div>
<div class="t" style="left:1221.30px;top:693.24px;font-size:12px;line-height:12px;font-weight:normal;color:#6E6E6E;letter-spacing:0.000px;-webkit-text-stroke:0.25px currentColor;">Day</div>
<div class="t" style="left:1350.50px;top:678.64px;font-size:12px;line-height:12px;font-weight:normal;color:#6E6E6E;letter-spacing:0.238px;-webkit-text-stroke:0.25px currentColor;">Terminations /</div>
<div class="t" style="left:1350.50px;top:693.24px;font-size:12px;line-height:12px;font-weight:normal;color:#6E6E6E;letter-spacing:0.000px;-webkit-text-stroke:0.25px currentColor;">Day</div>
<div class="r" style="left:1221px;top:716px;width:230px;height:1px;background:#E3E3E3;"></div>
<div class="t" style="left:1221.30px;top:727.01px;font-size:10.5px;line-height:10.5px;font-weight:normal;color:#7E7E7E;letter-spacing:0.057px;-webkit-text-stroke:0.25px currentColor;">Category</div>
<div class="t" style="left:1342.00px;top:727.01px;font-size:10.5px;line-height:10.5px;font-weight:normal;color:#7E7E7E;letter-spacing:0.125px;-webkit-text-stroke:0.25px currentColor;">Selection</div>
<div class="t" style="left:1421.20px;top:727.01px;font-size:10.5px;line-height:10.5px;font-weight:normal;color:#7E7E7E;letter-spacing:0.120px;-webkit-text-stroke:0.25px currentColor;">Latest</div>
<div class="r" style="left:1221px;top:742.4px;width:10.8px;height:10.8px;background:#0A5FFF;border-radius:2.5px;"></div>
<div class="t" style="left:1235.90px;top:742.81px;font-size:10.5px;line-height:10.5px;font-weight:normal;color:#262626;letter-spacing:0.004px;-webkit-text-stroke:0.25px currentColor;">System Pressure</div>
<div class="t" style="left:1364.60px;top:742.81px;font-size:10.5px;line-height:10.5px;font-weight:normal;color:#262626;letter-spacing:0.300px;-webkit-text-stroke:0.25px currentColor;">90%</div>
<div class="t" style="left:1428.80px;top:742.81px;font-size:10.5px;line-height:10.5px;font-weight:normal;color:#262626;letter-spacing:0.300px;-webkit-text-stroke:0.25px currentColor;">90%</div>
<div class="r" style="left:1221px;top:758.1px;width:10.8px;height:10.8px;background:#FF8A0A;border-radius:2.5px;"></div>
<div class="t" style="left:1235.90px;top:758.43px;font-size:10.5px;line-height:10.5px;font-weight:normal;color:#262626;letter-spacing:0.141px;-webkit-text-stroke:0.25px currentColor;">Task Timeout</div>
<div class="t" style="left:1369.50px;top:758.43px;font-size:10.5px;line-height:10.5px;font-weight:bold;color:#262626;letter-spacing:1.500px;">8%</div>
<div class="t" style="left:1435.20px;top:758.43px;font-size:10.5px;line-height:10.5px;font-weight:normal;color:#BDBDBD;letter-spacing:0.000px;-webkit-text-stroke:0.25px currentColor;">0%</div>
<div class="r" style="left:1221px;top:773.8px;width:10.8px;height:10.8px;background:#2AC534;border-radius:2.5px;"></div>
<div class="t" style="left:1235.90px;top:774.05px;font-size:10.5px;line-height:10.5px;font-weight:normal;color:#262626;letter-spacing:0.185px;-webkit-text-stroke:0.25px currentColor;">App Timeout</div>
<div class="t" style="left:1371.00px;top:774.05px;font-size:10.5px;line-height:10.5px;font-weight:normal;color:#BDBDBD;letter-spacing:0.000px;-webkit-text-stroke:0.25px currentColor;">0%</div>
<div class="t" style="left:1428.00px;top:774.05px;font-size:10.5px;line-height:10.5px;font-weight:bold;color:#262626;letter-spacing:0.700px;">10%</div>
<div class="r" style="left:1221px;top:789.5px;width:10.8px;height:10.8px;background:#9B30D5;border-radius:2.5px;"></div>
<div class="t" style="left:1235.90px;top:789.67px;font-size:10.5px;line-height:10.5px;font-weight:normal;color:#262626;letter-spacing:0.062px;-webkit-text-stroke:0.25px currentColor;">Other</div>
<div class="t" style="left:1369.90px;top:789.67px;font-size:10.5px;line-height:10.5px;font-weight:bold;color:#262626;letter-spacing:1.100px;">2%</div>
<div class="t" style="left:1435.20px;top:789.67px;font-size:10.5px;line-height:10.5px;font-weight:normal;color:#BDBDBD;letter-spacing:0.000px;-webkit-text-stroke:0.25px currentColor;">0%</div>
<div class="r" style="left:1221px;top:811px;width:230px;height:1px;background:#E3E3E3;"></div>
<div class="t" style="left:1221.30px;top:822.24px;font-size:10px;line-height:10px;font-weight:bold;color:#1E1E1E;letter-spacing:0.367px;">Details</div>
<div class="t" style="left:1239.80px;top:842.61px;font-size:10.5px;line-height:10.5px;font-weight:normal;color:#262626;letter-spacing:0.172px;-webkit-text-stroke:0.25px currentColor;">2.38 terminations / day more</div>
<div class="t" style="left:1239.80px;top:856.21px;font-size:10.5px;line-height:10.5px;font-weight:normal;color:#858585;letter-spacing:0.036px;-webkit-text-stroke:0.25px currentColor;">72% increase</div>
<svg class="r" style="left:1221px;top:841.0px" width="12" height="13" viewBox="0 0 12 13"><path d="M6 1.2 V11.8 M2 5.2 L6 1.2 L10 5.2" fill="none" stroke="#6A6A6A" stroke-width="1" stroke-linecap="round" stroke-linejoin="round"/></svg>
<div class="t" style="left:1239.80px;top:878.28px;font-size:10.5px;line-height:10.5px;font-weight:normal;color:#262626;letter-spacing:0.066px;-webkit-text-stroke:0.25px currentColor;">Selection released on 2/21/21</div>
<div class="t" style="left:1239.80px;top:891.88px;font-size:10.5px;line-height:10.5px;font-weight:normal;color:#858585;letter-spacing:0.167px;-webkit-text-stroke:0.25px currentColor;">2 months, 24 days before Latest</div>
<svg class="r" style="left:1220.5px;top:877.7px" width="13" height="12" viewBox="0 0 13 12"><rect x="1" y="1" width="11" height="10" rx="1.5" fill="none" stroke="#6A6A6A" stroke-width="0.9"/><rect x="1" y="1" width="11" height="2.4" fill="#6A6A6A"/><path d="M3 5 H10 M3 7 H10 M3 9 H10 M4.5 4.5 V9.5 M6.5 4.5 V9.5 M8.5 4.5 V9.5" stroke="#C4C4C4" stroke-width="0.6"/></svg>
</div>
<div id="frame"></div>
</div>
</body></html>
